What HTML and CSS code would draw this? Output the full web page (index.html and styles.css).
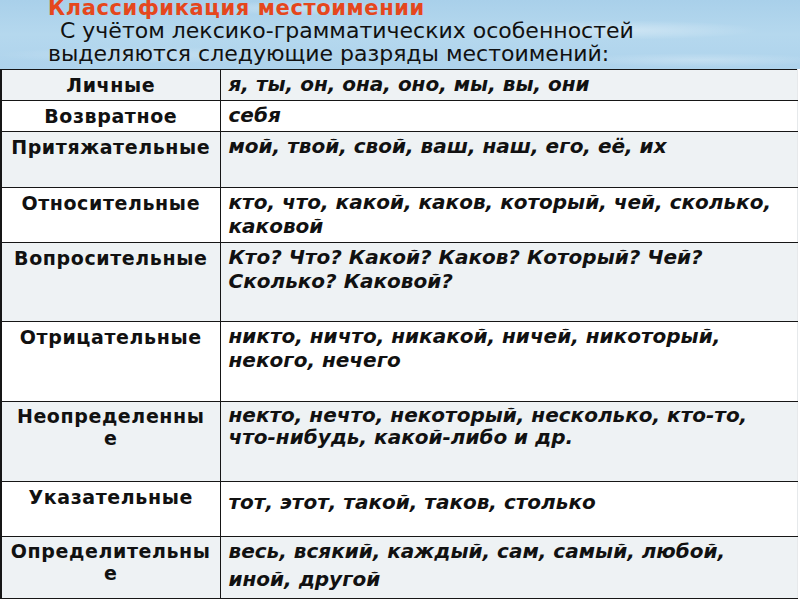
FILE: index.html
```html
<!DOCTYPE html>
<html lang="ru">
<head>
<meta charset="utf-8">
<title>Классификация местоимений</title>
<link rel="stylesheet" href="styles.css">
</head>
<body>
<header class="head">
  <h1 class="title">Классификация местоимении</h1>
  <p class="lead">С учётом лексико-грамматических особенностей<br>выделяются следующие разряды местоимений:</p>
</header>
<table class="grid">
  <colgroup><col class="c1"><col class="c2"></colgroup>
  <tr class="r31 alt"><th>Личные</th><td>я, ты, он, она, оно, мы, вы, они</td></tr>
  <tr class="r31"><th>Возвратное</th><td>себя</td></tr>
  <tr class="r56 alt"><th>Притяжательные</th><td>мой, твой, свой, ваш, наш, его, её, их</td></tr>
  <tr class="r55"><th>Относительные</th><td>кто, что, какой, каков, который, чей, сколько,<br>каковой</td></tr>
  <tr class="r79 alt"><th>Вопросительные</th><td>Кто? Что? Какой? Каков? Который? Чей?<br>Сколько? Каковой?</td></tr>
  <tr class="r80"><th>Отрицательные</th><td>никто, ничто, никакой, ничей, никоторый,<br>некого, нечего</td></tr>
  <tr class="r80 alt"><th class="tight">Неопределенны<br>е</th><td class="tight">некто, нечто, некоторый, несколько, кто-то,<br>что-нибудь, какой-либо и др.</td></tr>
  <tr class="r55"><th>Указательные</th><td class="low">тот, этот, такой, таков, столько</td></tr>
  <tr class="r62 alt"><th class="tight">Определительны<br>е</th><td class="loose">весь, всякий, каждый, сам, самый, любой,<br>иной, другой</td></tr>
</table>
</body>
</html>
```

FILE: styles.css
```css
html, body {
  margin: 0;
  padding: 0;
  background: #ffffff;
}
body {
  width: 800px;
  height: 600px;
  overflow: hidden;
  font-family: "DejaVu Sans", Verdana, sans-serif;
  color: #111;
}
.head {
  height: 69px;
  overflow: hidden;
  box-sizing: border-box;
  background:
    radial-gradient(ellipse 200px 14px at 620px 30px, rgba(255,255,255,0.35), rgba(255,255,255,0) 70%),
    radial-gradient(ellipse 160px 10px at 300px 8px, rgba(255,255,255,0.3), rgba(255,255,255,0) 70%),
    radial-gradient(ellipse 220px 12px at 150px 55px, rgba(255,255,255,0.25), rgba(255,255,255,0) 70%),
    radial-gradient(ellipse 180px 10px at 700px 60px, rgba(255,255,255,0.25), rgba(255,255,255,0) 70%),
    linear-gradient(180deg, #a9d0ea 0%, #b5d8ee 50%, #aed3ec 100%);
}
.title {
  margin: -2px 0 0 48px;
  font-size: 21px;
  line-height: 20px;
  letter-spacing: 0.6px;
  font-weight: bold;
  color: #e5471d;
}
.lead {
  margin: 1px 0 0 48px;
  font-size: 22px;
  line-height: 23px;
  text-indent: 12px;
  color: #111;
}
.grid {
  width: 798px;
  border-collapse: collapse;
  table-layout: fixed;
  line-height: 24px;
}
.c1 { width: 219px; }
.grid th, .grid td {
  border: 1px solid #161616;
  vertical-align: top;
  padding: 3px 4px 0 8px;
}
.grid th {
  font-size: 19px;
  letter-spacing: 0.6px;
  font-weight: bold;
  text-align: center;
  padding: 3px 1px 0 1px;
  border-left: 2px solid #161616;
}
.grid td {
  font-size: 20px;
  font-weight: bold;
  font-style: italic;
  padding-top: 2px;
  border-right: 1px solid #e6e9eb;
}
.grid tr { background: #ffffff; }
.grid tr.alt { background: #eef2f4; }
.r31 { height: 31px; }
.r55 { height: 55px; }
.r56 { height: 56px; }
.r62 { height: 62px; }
.r79 { height: 79px; }
.r80 { height: 80px; }
.grid .tight { line-height: 22px; }
.grid .low { padding-top: 8px; }
.grid .loose { line-height: 28px; padding-top: 0; }
```
